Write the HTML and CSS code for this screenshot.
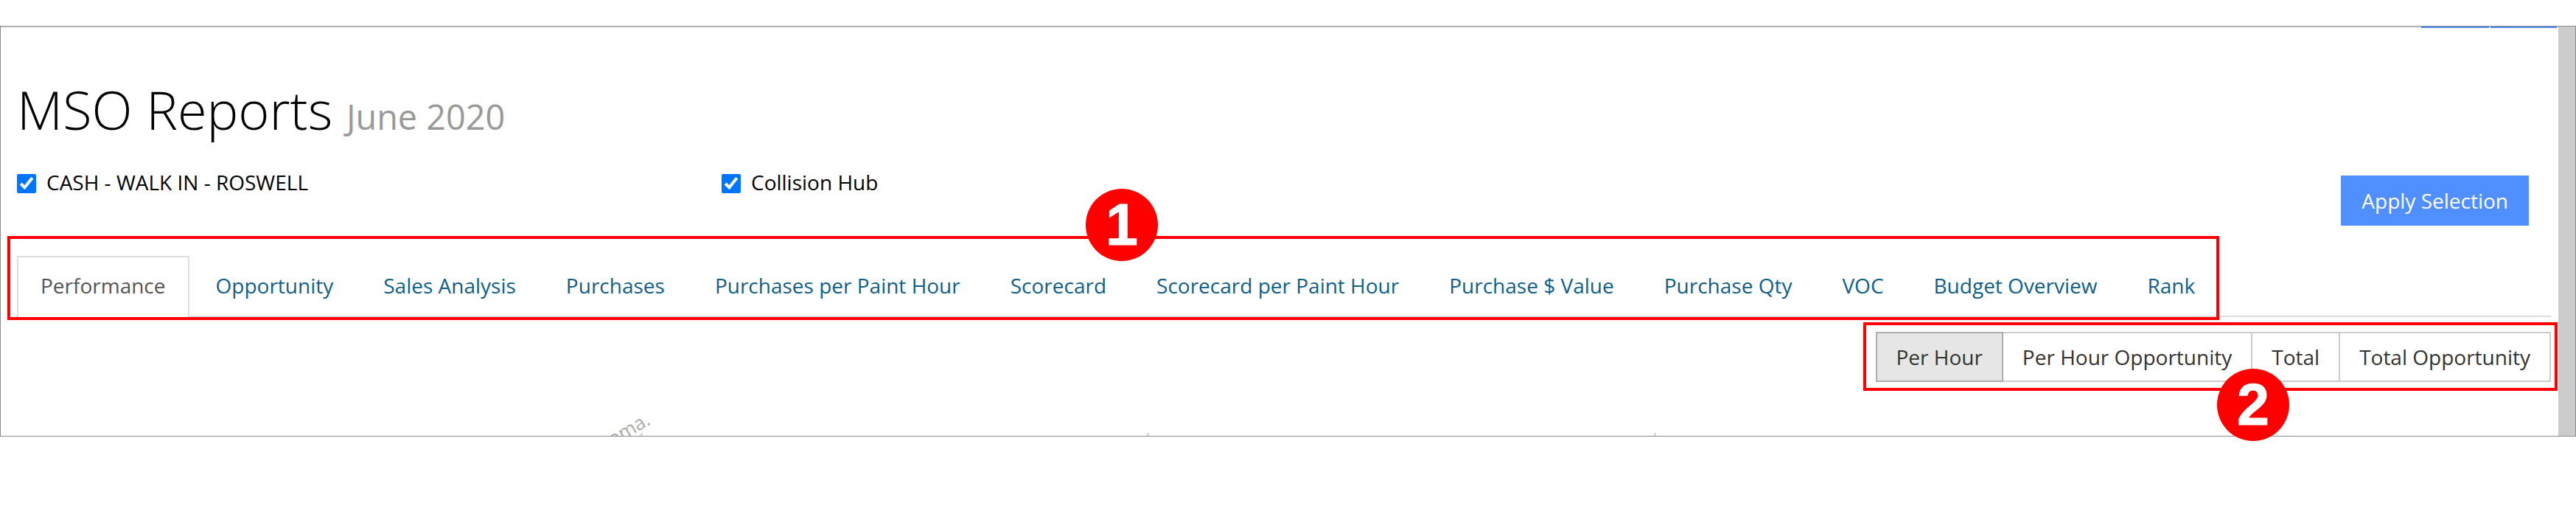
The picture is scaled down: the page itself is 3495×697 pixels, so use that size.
FILE: index.html
```html
<!DOCTYPE html>
<html lang="en">
<head>
  <meta charset="UTF-8">
  <meta name="viewport" content="width=device-width, initial-scale=1.0">
  <title>MSO Reports</title>
  <link rel="stylesheet" href="styles.css">
</head>
<body>
  <!-- Browser frame -->
  <div class="frame">
    <div class="main">
      <!-- Loading strip along the top -->
      <div class="top-strip">
        <div class="strip-track"></div>
        <div class="strip-blue strip-first"></div>
        <div class="strip-blue strip-second"></div>
      </div>

      <div class="content">
        <h1>MSO Reports <small>June 2020</small></h1>

        <div class="filter-row">
          <label class="check check-first"><input type="checkbox" checked> CASH - WALK IN - ROSWELL</label>
          <label class="check"><input type="checkbox" checked> Collision Hub</label>
          <button class="apply-btn">Apply Selection</button>
        </div>

        <!-- Report tabs -->
        <ul class="tabs">
          <li class="active"><a href="#">Performance</a></li>
          <li><a href="#">Opportunity</a></li>
          <li><a href="#">Sales Analysis</a></li>
          <li><a href="#">Purchases</a></li>
          <li><a href="#">Purchases per Paint Hour</a></li>
          <li><a href="#">Scorecard</a></li>
          <li><a href="#">Scorecard per Paint Hour</a></li>
          <li><a href="#">Purchase $ Value</a></li>
          <li><a href="#">Purchase Qty</a></li>
          <li><a href="#">VOC</a></li>
          <li><a href="#">Budget Overview</a></li>
          <li><a href="#">Rank</a></li>
        </ul>

        <!-- Unit switch -->
        <div class="btn-row">
          <div class="btn-group">
            <button class="active">Per Hour</button>
            <button>Per Hour Opportunity</button>
            <button>Total</button>
            <button>Total Opportunity</button>
          </div>
        </div>
      </div>

      <!-- Tops of the chart axis labels, cut off by the frame -->
      <span class="axis-label">oma.</span>
      <span class="axis-tick tick-zero"></span>
      <span class="axis-tick tick-one"></span>
      <span class="axis-tick tick-two"></span>
    </div>
    <div class="scrollbar"></div>
  </div>

  <!-- Annotations on top of the screenshot -->
  <div class="mark mark-tabs"></div>
  <div class="mark mark-group"></div>
  <div class="badge badge-one">1</div>
  <div class="badge badge-two">2</div>
</body>
</html>
```

FILE: styles.css
```css
/* Global Styles */
html, body {
  margin: 0;
  padding: 0;
  background-color: #ffffff;
}

body {
  font-family: "Open Sans", Arial, sans-serif;
  font-size: 28px;
  line-height: 40px;
  color: #000000;
  height: 697px;
  overflow: hidden;
  position: relative;
}

/* Frame */
.frame {
  margin-top: 35px;
  height: 557px;
  box-sizing: border-box;
  border: 1px solid #8a8a8a;
  display: flex;
}

.main {
  flex: 1;
  position: relative;
  overflow: hidden;
  display: flex;
  flex-direction: column;
}

.scrollbar {
  width: 23px;
  background-color: #cccccc;
}

/* Top strip */
.top-strip {
  display: flex;
  height: 2px;
  gap: 2px;
  padding-right: 2px;
  background-color: #e4e4e4;
}

.strip-track {
  flex: 1;
}

.strip-blue {
  background-color: #4f8ff0;
}

.strip-first {
  width: 92px;
}

.strip-second {
  width: 90px;
}

.content {
  padding: 0 10px 0 22px;
}

/* Title */
h1 {
  margin: 66px 0 0;
  font-size: 72px;
  line-height: 88px;
  font-weight: 300;
}

h1 small {
  font-size: 46.8px;
  line-height: 1;
  font-weight: 400;
  color: #999999;
}

/* Filters */
.filter-row {
  display: flex;
  align-items: flex-start;
  margin-top: 44px;
  height: 111px;
}

.check {
  display: flex;
  align-items: center;
  gap: 14px;
  height: 22px;
  white-space: nowrap;
}

.check input {
  width: 26px;
  height: 26px;
  margin: 4px 0 0;
}

.check-first {
  width: 956px;
}

.apply-btn {
  margin: 2px 30px 0 auto;
  height: 68px;
  padding: 0 28px;
  border: none;
  background-color: #4f8fff;
  color: #ffffff;
  font-family: inherit;
  font-size: 28px;
}

/* Tabs */
.tabs {
  list-style-type: none;
  display: flex;
  margin: 0 0 0 -2px;
  padding: 0;
  height: 81px;
  border-bottom: 2px solid #dddddd;
}

.tabs li {
  border: 2px solid transparent;
  border-bottom: none;
  height: 81px;
  box-sizing: border-box;
}

.tabs li.active {
  border-color: #dddddd;
  height: 83px;
  margin: 0 2px;
  background-color: #ffffff;
}

.tabs a {
  display: block;
  padding: 18px 32px;
  color: #0f5f8c;
  text-decoration: none;
  white-space: nowrap;
}

.tabs li.active a {
  padding: 18px 30px;
  color: #555555;
}

/* Button group */
.btn-row {
  display: flex;
  justify-content: flex-end;
  margin-top: 20px;
}

.btn-group {
  display: flex;
}

.btn-group button {
  height: 68px;
  padding: 0 26px;
  margin-left: -2px;
  border: 2px solid #cccccc;
  background-color: #ffffff;
  color: #333333;
  font-family: inherit;
  font-size: 28px;
}

.btn-group button.active {
  padding-left: 25px;
  background-color: #e6e6e6;
  border-color: #adadad;
  position: relative;
}

/* Chart leftovers */
.axis-label {
  position: absolute;
  left: 817px;
  top: 517px;
  font-size: 26px;
  line-height: 26px;
  color: #aaaaaa;
  transform-origin: 100% 50%;
  transform: rotate(-30deg);
}

.axis-tick {
  position: absolute;
  top: 551px;
  width: 2px;
  height: 6px;
  background-color: #cccccc;
  transform: rotate(30deg);
}

.tick-zero {
  left: 868px;
}

.tick-one {
  left: 1555px;
}

.tick-two {
  left: 2243px;
}

/* Annotations */
.mark {
  position: absolute;
  box-sizing: border-box;
  border: 4px solid #ff0000;
}

.mark-tabs {
  left: 10px;
  top: 320px;
  width: 3001px;
  height: 114px;
}

.mark-group {
  left: 2528px;
  top: 437px;
  width: 942px;
  height: 93px;
}

.badge {
  position: absolute;
  width: 98px;
  height: 98px;
  border-radius: 50%;
  background-color: #ff0000;
  color: #ffffff;
  -webkit-text-stroke: 1px #ffffff;
  font-family: "Liberation Sans", Arial, sans-serif;
  font-weight: bold;
  font-size: 79px;
  line-height: 98px;
  text-align: center;
}

.badge-one {
  left: 1473px;
  top: 256px;
}

.badge-two {
  left: 3008px;
  top: 500px;
}
```
